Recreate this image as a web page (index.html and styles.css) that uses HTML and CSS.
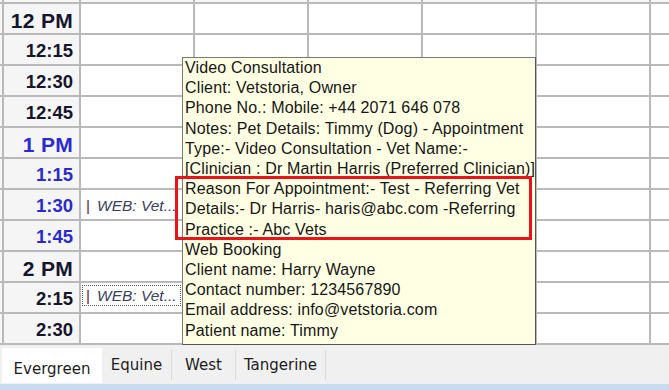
FILE: index.html
```html
<!DOCTYPE html>
<html>
<head>
<meta charset="utf-8">
<link rel="stylesheet" href="styles.css">
</head>
<body>
<div class="screen">
  <div class="grid">
    <div class="edge"></div><div class="edge"></div><div class="edge"></div><div class="edge"></div><div class="edge"></div><div class="edge"></div><div class="edge"></div><div class="edge"></div>

    <div class="edge"></div><div class="time hour dark">12 PM</div><div class="cell"></div><div class="cell"></div><div class="cell"></div><div class="cell"></div><div class="cell"></div><div class="cell"></div>
    <div class="edge"></div><div class="time dark">12:15</div><div class="cell"></div><div class="cell"></div><div class="cell"></div><div class="cell"></div><div class="cell"></div><div class="cell"></div>
    <div class="edge"></div><div class="time dark">12:30</div><div class="cell"></div><div class="cell"></div><div class="cell"></div><div class="cell"></div><div class="cell"></div><div class="cell"></div>
    <div class="edge"></div><div class="time dark">12:45</div><div class="cell"></div><div class="cell"></div><div class="cell"></div><div class="cell"></div><div class="cell"></div><div class="cell"></div>
    <div class="edge"></div><div class="time hour blue">1 PM</div><div class="cell"></div><div class="cell"></div><div class="cell"></div><div class="cell"></div><div class="cell"></div><div class="cell"></div>
    <div class="edge"></div><div class="time blue">1:15</div><div class="cell"></div><div class="cell"></div><div class="cell"></div><div class="cell"></div><div class="cell"></div><div class="cell"></div>
    <div class="edge"></div><div class="time blue">1:30</div><div class="cell appt"><span class="bar">|</span><span class="appt-text">WEB: Vet...</span></div><div class="cell"></div><div class="cell"></div><div class="cell"></div><div class="cell"></div><div class="cell"></div>
    <div class="edge"></div><div class="time blue">1:45</div><div class="cell"></div><div class="cell"></div><div class="cell"></div><div class="cell"></div><div class="cell"></div><div class="cell"></div>
    <div class="edge"></div><div class="time hour dark">2 PM</div><div class="cell"></div><div class="cell"></div><div class="cell"></div><div class="cell"></div><div class="cell"></div><div class="cell"></div>
    <div class="edge"></div><div class="time dark">2:15</div><div class="cell"><div class="focus"><span class="bar">|</span><span class="appt-text">WEB: Vet...</span></div></div><div class="cell"></div><div class="cell"></div><div class="cell"></div><div class="cell"></div><div class="cell"></div>
    <div class="edge"></div><div class="time dark">2:30</div><div class="cell"></div><div class="cell"></div><div class="cell"></div><div class="cell"></div><div class="cell"></div><div class="cell"></div>
  </div>

  <div class="tabbar">
    <div class="tab active">Evergreen</div>
    <div class="tab t-equine">Equine</div>
    <div class="tab t-west">West</div>
    <div class="tab t-tang">Tangerine</div>
  </div>
  <div class="statusbar"></div>

  <div class="tooltip">
    <div>Video Consultation</div>
    <div>Client: Vetstoria, Owner</div>
    <div>Phone No.: Mobile: +44 2071 646 078</div>
    <div>Notes: Pet Details: Timmy (Dog) - Appointment</div>
    <div>Type:- Video Consultation - Vet Name:-</div>
    <div>[Clinician : Dr Martin Harris (Preferred Clinician)]</div>
    <div>Reason For Appointment:- Test - Referring Vet</div>
    <div>Details:- Dr Harris- haris@abc.com -Referring</div>
    <div>Practice :- Abc Vets</div>
    <div>Web Booking</div>
    <div>Client name: Harry Wayne</div>
    <div>Contact number: 1234567890</div>
    <div>Email address: info@vetstoria.com</div>
    <div>Patient name: Timmy</div>
  </div>
  <div class="highlight"></div>
</div>
</body>
</html>
```

FILE: styles.css
```css
html, body {
  margin: 0;
  padding: 0;
}
body {
  width: 669px;
  height: 390px;
  overflow: hidden;
  background: #f0f0f0;
  font-family: "Liberation Sans", Arial, sans-serif;
}
.screen {
  position: relative;
  width: 669px;
  height: 390px;
  display: flex;
  flex-direction: column;
}
.grid {
  display: grid;
  grid-template-columns: 2px 75px repeat(5, 112px) 1fr;
  grid-template-rows: 2px repeat(11, 29px);
  gap: 2px;
  background: #b9b9b9;
  padding-bottom: 2px;
}
.edge {
  background: #f6f6f6;
}
.cell {
  background: #ffffff;
  position: relative;
}
.time {
  background: #f5f5f5;
  display: flex;
  align-items: center;
  justify-content: flex-end;
  padding-right: 6px;
  padding-top: 3px;
  font-weight: bold;
  font-size: 18.5px;
  line-height: 1;
}
.time.hour {
  font-size: 21px;
  letter-spacing: 0.3px;
}
.dark { color: #15152e; }
.blue { color: #2b2bcc; }
.appt {
  display: flex;
  align-items: center;
  padding-left: 5px;
  padding-top: 2px;
  font-style: italic;
  font-size: 15.5px;
  white-space: nowrap;
}
.bar {
  color: #5a1c3c;
  font-style: normal;
}
.appt-text {
  color: #3a3f5c;
  margin-left: 7px;
}
.focus {
  margin: 2px 0 0 1px;
  width: 99px;
  height: 21px;
  border: 1px dotted #5a5a5a;
  display: flex;
  align-items: center;
  padding-left: 3px;
  font-style: italic;
  font-size: 15.5px;
  white-space: nowrap;
  box-sizing: border-box;
}
.tabbar {
  display: flex;
  align-items: flex-start;
  height: 39px;
  padding-left: 2px;
  padding-top: 2px;
  box-sizing: border-box;
  background: #f0f0f0;
  font-family: "DejaVu Sans", Tahoma, sans-serif;
  font-size: 15px;
  color: #1c1c1c;
}
.tab {
  height: 30px;
  margin-top: 3px;
  display: flex;
  align-items: center;
  justify-content: center;
  border-right: 1px solid #d9d9d9;
  box-sizing: border-box;
}
.tab.active {
  width: 100px;
  height: 35px;
  margin-top: 1px;
  background: #ffffff;
  padding-top: 6px;
  border-right: none;
}
.t-equine { width: 70px; }
.t-west { width: 64px; }
.t-tang { width: 90px; }
.statusbar {
  height: 6px;
  margin-top: auto;
  background: #c8dcf1;
}
.tooltip {
  position: absolute;
  left: 182px;
  top: 57px;
  width: 354px;
  height: 288px;
  box-sizing: border-box;
  background: #ffffe3;
  border: 1px solid #7a7a7a;
  border-right-color: #555;
  border-bottom-color: #555;
  padding: 0 0 0 2px;
  font-family: "Liberation Sans", Arial, sans-serif;
  font-size: 16px;
  letter-spacing: 0.15px;
  line-height: 20.2px;
  color: #161616;
  white-space: nowrap;
  overflow: hidden;
}
.highlight {
  position: absolute;
  left: 175px;
  top: 176px;
  width: 357px;
  height: 64px;
  box-sizing: border-box;
  border: 3px solid #e8141a;
}
```
